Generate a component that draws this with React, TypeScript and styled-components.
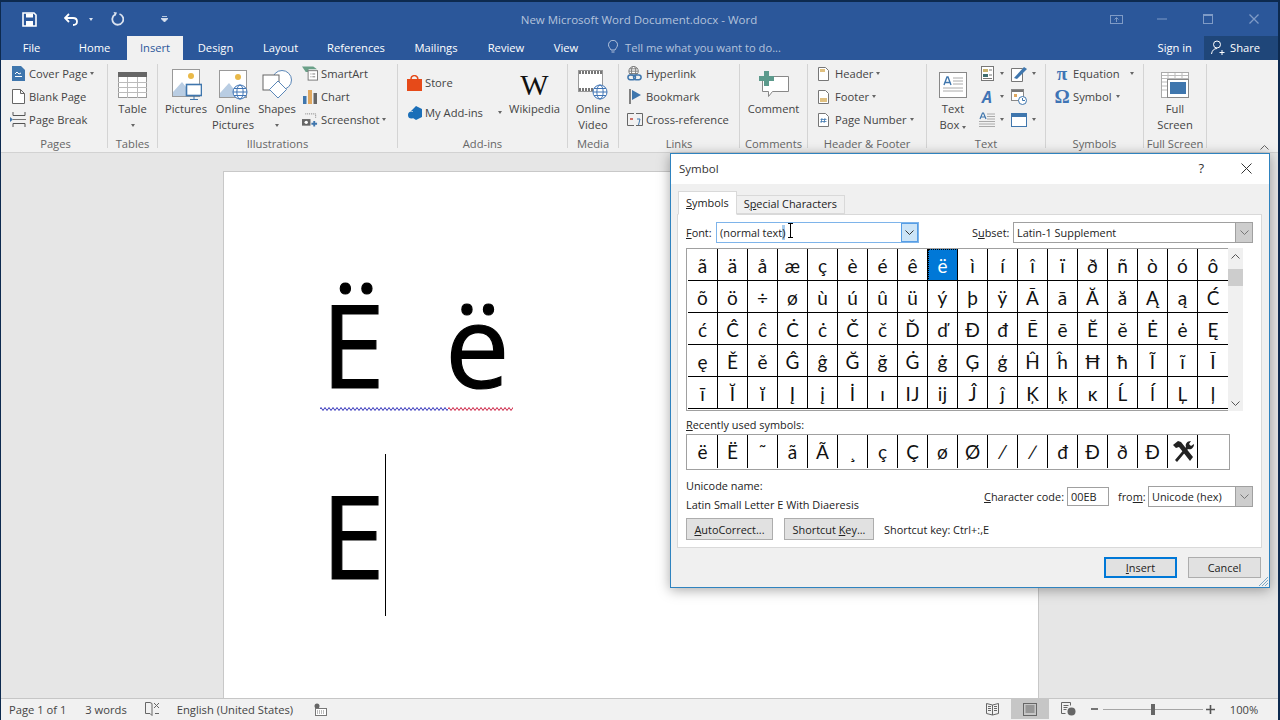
import React from 'react'
import styled, { createGlobalStyle } from 'styled-components'

const Global = createGlobalStyle`
  html, body { margin: 0; padding: 0; overflow: hidden; }
  body { font-family: "Open Sans", "Noto Sans", sans-serif; font-size: 11.2px; color: #444; }
`

const Frame = styled.div`
  position: relative;
  width: 1280px;
  height: 720px;
  box-sizing: border-box;
  display: flex;
  flex-direction: column;
  background: #2b579a;
  border-top: 2px solid #0d2a4f;
  border-left: 1px solid #0d2a4f;
  border-right: 2px solid #0d2a4f;
  overflow: hidden;
`
const TitleBar = styled.div`
  height: 34px;
  display: flex;
  align-items: center;
  position: relative;
  flex: none;
`
const QatButton = styled.div<{ $w: number }>`
  width: ${p => p.$w}px;
  display: flex;
  justify-content: center;
  align-items: center;
`
const Qat = styled.div`
  display: flex;
  align-items: center;
  padding-left: 18px;
  width: 200px;
`
const DocTitle = styled.div`
  position: absolute;
  left: 0;
  right: 0;
  top: 10px;
  text-align: center;
  color: #b4c3dc;
  font-size: 11.5px;
  line-height: 16px;
  padding-right: 1px;
`
const WindowControls = styled.div`
  margin-left: auto;
  display: flex;
  align-items: center;
  padding-right: 1px;
`
const WinButton = styled.div`
  width: 46px;
  display: flex;
  justify-content: center;
`
const TabRow = styled.div`
  height: 24px;
  display: flex;
  flex: none;
  align-items: stretch;
`
const Tab = styled.div<{ $w: number; $active?: boolean }>`
  width: ${p => p.$w}px;
  display: flex;
  align-items: center;
  justify-content: center;
  padding-bottom: 2px;
  box-sizing: border-box;
  color: ${p => (p.$active ? '#2b579a' : '#fff')};
  background: ${p => (p.$active ? '#f1f1f1' : 'transparent')};
`
const TellMe = styled.div`
  display: flex;
  align-items: center;
  gap: 7px;
  padding: 0 0 2px 15px;
  color: #b4c3dc;
`
const SignIn = styled.div`
  margin-left: auto;
  color: #fff;
  display: flex;
  align-items: center;
  padding: 0 12px 2px 0;
`
const Share = styled.div`
  width: 74px;
  background: #1f4679;
  color: #fff;
  display: flex;
  align-items: center;
  gap: 4px;
  padding: 0 0 2px 7px;
  box-sizing: border-box;
`
const Ribbon = styled.div`
  height: 93px;
  flex: none;
  background: #f1f1f1;
  border-bottom: 1px solid #d2d2d2;
  box-sizing: border-box;
  display: flex;
  padding: 4px 0 0 3px;
`
const Group = styled.section<{ $w: number }>`
  width: ${p => p.$w}px;
  height: 84px;
  box-sizing: border-box;
  border-right: 1px solid #d4d4d4;
  display: flex;
  flex-direction: column;
  flex: none;
`
const GroupBody = styled.div`
  flex: 1;
  min-height: 0;
  display: flex;
`
const GroupLabel = styled.div`
  height: 16px;
  margin-bottom: -4px;
  line-height: 16px;
  text-align: center;
  color: #666;
  white-space: nowrap;
`
const Large = styled.div<{ $w: number }>`
  width: ${p => p.$w}px;
  flex: none;
  display: flex;
  flex-direction: column;
  align-items: center;
  line-height: 16px;
  text-align: center;
  white-space: nowrap;
`
const LargeIcon = styled.div`
  height: 33px;
  margin-top: 4px;
  display: flex;
  align-items: center;
  justify-content: center;
`
const Column = styled.div<{ $pad?: number; $w?: number; $gap?: number }>`
  display: flex;
  flex-direction: column;
  box-sizing: border-box;
  margin-top: ${p => (p.$gap ? '7px' : '-2px')};
  padding-left: ${p => p.$pad ?? 0}px;
  ${p => (p.$w ? `width: ${p.$w}px; flex: none;` : '')}
  ${p => (p.$gap ? `gap: ${p.$gap}px;` : '')}
`
const Item = styled.div<{ $gap?: number }>`
  height: 23px;
  display: flex;
  align-items: center;
  gap: ${p => p.$gap ?? 3}px;
  white-space: nowrap;
`
const Slot = styled.span<{ $w?: number; $ml?: number }>`
  width: ${p => p.$w ?? 16}px;
  margin-left: ${p => p.$ml ?? 0}px;
  flex: none;
  display: flex;
  justify-content: center;
  align-items: center;
`
const Caret = styled.i<{ $ml?: number; $light?: boolean }>`
  display: inline-block;
  width: 0;
  height: 0;
  margin-left: ${p => p.$ml ?? 3}px;
  border-left: 2.5px solid transparent;
  border-right: 2.5px solid transparent;
  border-top: 3px solid ${p => (p.$light ? '#dbe3f0' : '#666')};
  flex: none;
`
const CaretRow = styled.div`
  height: 16px;
  display: flex;
  align-items: center;
  justify-content: center;
`
const Wiki = styled.div`
  font-family: "Liberation Serif", serif;
  font-size: 30px;
  color: #111;
  line-height: 30px;
`
const MathGlyph = styled.span`
  font-family: "Liberation Serif", serif;
  font-weight: 700;
  font-size: 19px;
  color: #3f74b5;
  line-height: 20px;
`
const WordArtA = styled.span`
  font-family: "Open Sans", sans-serif;
  font-weight: 700;
  font-style: italic;
  font-size: 16px;
  color: #3f74b5;
  line-height: 16px;
`
const Collapse = styled.div`
  margin-left: auto;
  align-self: flex-end;
  margin-bottom: 2px;
  margin-right: 9px;
  display: flex;
`
const Workspace = styled.main`
  flex: 1;
  min-height: 0;
  background: #e6e6e6;
  padding: 18px 0 0 222px;
  overflow: hidden;
`
const Page = styled.div`
  width: 816px;
  height: 620px;
  box-sizing: border-box;
  background: #fff;
  border: 1px solid #c8c8c8;
  padding: 93px 0 0 96px;
  font-family: "Open Sans", sans-serif;
  color: #000;
`
const DocLine = styled.div<{ $h: number }>`
  height: ${p => p.$h}px;
  display: flex;
  align-items: flex-end;
  font-size: 115px;
  -webkit-text-stroke: 1.2px #000;
  line-height: 1;
`
const DocLetter = styled.span<{ $ml?: number }>`
  margin-left: ${p => p.$ml ?? 0}px;
`
const DocCaret = styled.span`
  width: 1px;
  height: 162px;
  background: #000;
  margin-left: 0;
  margin-bottom: -24px;
`
const Squiggles = styled.div`
  display: flex;
  margin-top: 5px;
  height: 5px;
`
const StatusBar = styled.footer`
  height: 22px;
  flex: none;
  background: #f1f1f1;
  border-top: 1px solid #c6c6c6;
  box-sizing: border-box;
  display: flex;
  align-items: center;
  padding: 0 0 1px 8px;
  color: #444;
`
const StatusText = styled.span<{ $ml?: number }>`
  margin-left: ${p => p.$ml ?? 0}px;
  white-space: nowrap;
`
const StatusRight = styled.div`
  margin-left: auto;
  display: flex;
  align-items: center;
  height: 100%;
`
const ViewBtn = styled.div<{ $active?: boolean }>`
  width: 38px;
  height: 100%;
  display: flex;
  align-items: center;
  justify-content: center;
  background: ${p => (p.$active ? '#c6c6c6' : 'transparent')};
`
const ZoomSlider = styled.div`
  width: 100px;
  height: 1px;
  background: #a6a6a6;
  margin: 0 3px 0 5px;
  display: flex;
  justify-content: center;
  align-items: center;
`
const ZoomThumb = styled.div`
  width: 4px;
  height: 11px;
  background: #666;
  flex: none;
`
const ZoomPct = styled.div`
  width: 58px;
  margin-right: 5px;
  text-align: center;
`

/* Symbol dialog */
const Dialog = styled.div`
  position: absolute;
  left: 669px;
  top: 151px;
  width: 600px;
  height: 435px;
  box-sizing: border-box;
  background: #f0f0f0;
  border: 1px solid #2f83bf;
  box-shadow: 0 2px 12px rgba(0, 0, 0, 0.35);
  display: flex;
  flex-direction: column;
  font-size: 10.9px;
  color: #222;
`
const DlgTitle = styled.div`
  height: 30px;
  box-sizing: border-box;
  background: #fff;
  display: flex;
  align-items: center;
  padding: 0 17px 2px 8px;
  font-size: 11.5px;
  flex: none;
  color: #333;
`
const Help = styled.span`
  margin-left: auto;
  margin-right: 37px;
  font-size: 13px;
`
const DlgTabs = styled.div`
  display: flex;
  align-items: flex-end;
  height: 30px;
  padding-left: 7px;
  flex: none;
  position: relative;
  z-index: 1;
`
const DlgTab = styled.div<{ $active?: boolean }>`
  height: ${p => (p.$active ? 24 : 19)}px;
  box-sizing: border-box;
  padding: 0 7px 2px;
  display: flex;
  align-items: center;
  border: 1px solid #d9d9d9;
  border-bottom: ${p => (p.$active ? '1px solid #fff' : '1px solid #d9d9d9')};
  border-left: ${p => (p.$active ? '1px solid #d9d9d9' : 'none')};
  background: ${p => (p.$active ? '#fff' : '#f0f0f0')};
  margin-bottom: ${p => (p.$active ? -1 : 0)}px;
`
const Panel = styled.div`
  margin: 0 7px 0 6px;
  height: 334px;
  flex: none;
  box-sizing: border-box;
  background: #fff;
  border: 1px solid #d9d9d9;
  padding: 7px 8px 0 8px;
`
const FieldRow = styled.div`
  display: flex;
  align-items: center;
  height: 21px;
`
const Label = styled.span<{ $ml?: number; $w?: number }>`
  margin-left: ${p => p.$ml ?? 0}px;
  ${p => (p.$w ? `width: ${p.$w}px; flex: none;` : '')}
  white-space: nowrap;
`
const Select = styled.div<{ $w: number; $focus?: boolean }>`
  width: ${p => p.$w}px;
  height: 21px;
  box-sizing: border-box;
  border: 1px solid ${p => (p.$focus ? '#7eb4ea' : '#a0a0a0')};
  background: #fff;
  display: flex;
  align-items: center;
  padding-left: 3px;
  white-space: nowrap;
  flex: none;
`
const SelectBtn = styled.div<{ $focus?: boolean }>`
  margin-left: auto;
  width: 17px;
  height: 19px;
  box-sizing: border-box;
  display: flex;
  align-items: center;
  justify-content: center;
  background: ${p => (p.$focus ? '#cce4f7' : '#cdcdcd')};
  border-left: 1px solid ${p => (p.$focus ? '#569de5' : '#a0a0a0')};
  ${p => p.$focus && 'border: 1px solid #569de5;'}
`
const Highlight = styled.span`
  background: #a8cdee;
`
const GridRow = styled.div`
  display: flex;
  margin-top: 5px;
`
const SymbolGrid = styled.div`
  display: grid;
  grid-template-columns: repeat(18, 30px);
  grid-auto-rows: 32px;
  border-top: 1px solid #a0a0a0;
  border-left: 1px solid #a0a0a0;
  border-bottom: 1px solid #a0a0a0;
  padding-left: 1px;
  width: 542px;
  box-sizing: border-box;
  height: 163px;
`
const Cell = styled.div<{ $selected?: boolean; $recent?: boolean }>`
  box-sizing: border-box;
  display: flex;
  align-items: center;
  justify-content: center;
  padding-top: ${p => (p.$recent ? 0 : 1)}px;
  font-family: Lato, "Open Sans", sans-serif;
  font-size: 19px;
  color: ${p => (p.$selected ? '#fff' : '#111')};
  background: ${p => (p.$selected ? '#0078d7' : '#fff')};
  border-right: 1px solid #000;
  border-bottom: ${p => (p.$recent ? 'none' : '1px solid #000')};
  ${p => p.$selected && 'outline: 1px dotted #000; outline-offset: -1px;'}
  &:nth-child(18n) { border-right: none; }
`
const ScrollBar = styled.div`
  width: 15px;
  height: 163px;
  background: #f0f0f0;
  display: flex;
  flex-direction: column;
  align-items: center;
`
const ScrollArrow = styled.div`
  height: 16px;
  width: 100%;
  display: flex;
  align-items: center;
  justify-content: center;
  flex: none;
`
const ScrollThumb = styled.div`
  width: 100%;
  height: 17px;
  background: #cdcdcd;
  margin-top: 5px;
  margin-bottom: auto;
`
const Recent = styled.div`
  margin-top: 6px;
  line-height: 15px;
`
const RecentGrid = styled(SymbolGrid)`
  margin-top: 2px;
  grid-auto-rows: 33px;
  width: 544px;
  height: 36px;
  border: 1px solid #a0a0a0;
`
const InfoRow = styled.div`
  display: flex;
  margin-top: 6px;
  height: 40px;
`
const InfoLeft = styled.div`
  width: 298px;
  line-height: 19px;
  white-space: nowrap;
`
const InfoRight = styled.div`
  display: flex;
  align-items: center;
  height: 22px;
  margin-top: 9px;
`
const CodeInput = styled.div`
  width: 42px;
  height: 19px;
  box-sizing: border-box;
  border: 1px solid #a0a0a0;
  line-height: 17px;
  padding-left: 3px;
  background: #fff;
`
const BtnRow = styled.div`
  display: flex;
  align-items: center;
  margin-top: 2px;
`
const Btn = styled.div<{ $w: number; $h?: number; $primary?: boolean; $ml?: number }>`
  width: ${p => p.$w}px;
  height: ${p => p.$h ?? 22}px;
  margin-left: ${p => p.$ml ?? 0}px;
  box-sizing: border-box;
  display: flex;
  align-items: center;
  justify-content: center;
  white-space: nowrap;
  background: #e1e1e1;
  border: ${p => (p.$primary ? '2px solid #0078d7' : '1px solid #adadad')};
`
const DlgFooter = styled.div`
  display: flex;
  justify-content: flex-end;
  gap: 11px;
  padding: 9px 8px 0 0;
`
const Grip = styled.svg`
  position: absolute;
  right: 1px;
  bottom: 1px;
`
const IBeam = styled.svg`
  position: absolute;
  left: 116px;
  top: 69px;
`

/* drawings */
const Globe = ({ cx, cy, r, c = '#3f74b5' }: { cx: number; cy: number; r: number; c?: string }) => (
  <g fill="none" stroke={c} strokeWidth="1">
    <circle cx={cx} cy={cy} r={r} fill="#fff" />
    <ellipse cx={cx} cy={cy} rx={r * 0.45} ry={r} />
    <path d={`M${cx - r} ${cy}h${r * 2}M${cx - r * 0.85} ${cy - r * 0.5}h${r * 1.7}M${cx - r * 0.85} ${cy + r * 0.5}h${r * 1.7}`} />
  </g>
)
const Photo = () => (
  <g>
    <rect x="1.5" y="1.5" width="27" height="27" fill="#fff" stroke="#999" />
    <circle cx="20" cy="8" r="3" fill="#e9b949" />
    <path d="M2 28V24L11 14l8 10v4z" fill="#b9cde3" />
  </g>
)
const I = {
  Cover: () => (
    <svg width="13" height="15" viewBox="0 0 13 15"><path d="M0 0h9l4 4v11H0z" fill="#3f76ad" /><path d="M3 8l2-2 2 2 2-1M3 10.5h7" stroke="#fff" fill="none" /></svg>
  ),
  Blank: () => (
    <svg width="13" height="15" viewBox="0 0 13 15"><path d="M.5.5h8l4 4v10H.5zM8.500.5v4h4" fill="#fff" stroke="#666" /></svg>
  ),
  Break: () => (
    <svg width="16" height="15" viewBox="0 0 16 15"><path d="M3 0v3.5h12V0M3 15v-3.5h12V15" fill="none" stroke="#555" /><path d="M3 7.5h13" stroke="#777" /><path d="M0 5l3 2.5L0 10z" fill="#3f76ad" /></svg>
  ),
  Table: () => (
    <svg width="29" height="26" viewBox="0 0 29 26"><rect x=".5" y=".5" width="28" height="25" fill="#fff" stroke="#999" /><rect width="29" height="5" fill="#666" /><path d="M0 10.5h29M0 15.5h29M0 20.5h29M9.5 5v21M19.5 5v21" stroke="#bbb" /></svg>
  ),
  Pictures: () => (
    <svg width="31" height="33" viewBox="0 0 31 33"><Photo /><rect x="15.5" y="16.5" width="15" height="11" fill="#fff" stroke="#3f76ad" strokeWidth="1.6" /><path d="M23 28v3M19 31.5h8" stroke="#3f76ad" /></svg>
  ),
  Online: () => (
    <svg width="30" height="31" viewBox="0 0 30 31"><Photo /><Globe cx={22} cy={23} r={7} /></svg>
  ),
  Shapes: () => (
    <svg width="31" height="30" viewBox="0 0 31 30"><circle cx="20" cy="10" r="9.5" fill="#fff" stroke="#5b87b8" /><rect x="1" y="5" width="16" height="15" fill="#fff" stroke="#666" /><path d="M16 11l8.5 8.5L16 28l-8.5-8.5z" fill="#fff" stroke="#5b87b8" /></svg>
  ),
  SmartArt: () => (
    <svg width="17" height="15" viewBox="0 0 17 15"><path d="M0 0h12l4 3H7v3H4z" fill="#6aa088" /><rect x="6.5" y="4.5" width="10" height="10" fill="#fff" stroke="#777" /><path d="M9 8h1M9 11h1M11 8h3M11 11h3" stroke="#777" /></svg>
  ),
  Chart: () => (
    <svg width="14" height="14" viewBox="0 0 14 14"><rect y="6" width="3.5" height="8" fill="#3f76ad" /><rect x="5" width="4" height="14" fill="#e0a860" /><rect x="10.5" y="3" width="3.5" height="11" fill="#666" /></svg>
  ),
  Screenshot: () => (
    <svg width="17" height="14" viewBox="0 0 17 14"><path d="M3.5.5h11v5" fill="none" stroke="#777" strokeDasharray="1 1" /><rect y="6" width="9" height="7" fill="#666" /><circle cx="4.5" cy="9.5" r="1.8" fill="#fff" /><path d="M13 8v6M10 11h6" stroke="#3f76ad" strokeWidth="2" /></svg>
  ),
  Store: () => (
    <svg width="15" height="16" viewBox="0 0 15 16"><path d="M0 4h15v12H0z" fill="#e64a19" /><path d="M4 4c0-4 6-5 7 0" fill="none" stroke="#e64a19" strokeWidth="1.4" /></svg>
  ),
  AddIns: () => (
    <svg width="14" height="14" viewBox="0 0 14 14"><path d="M8 0l6 3v8l-6 3-3-2V5H3z" fill="#1b6fb8" /><circle cx="3.5" cy="9" r="3.5" fill="#1b6fb8" /></svg>
  ),
  Video: () => (
    <svg width="30" height="30" viewBox="0 0 30 30"><rect x=".5" y=".5" width="24" height="21" fill="#fff" stroke="#999" /><path d="M1 2.5h23M1 19.5h23" stroke="#777" strokeWidth="3" strokeDasharray="2 1" /><Globe cx={22} cy={22} r={7} /></svg>
  ),
  Hyperlink: () => (
    <svg width="17" height="16" viewBox="0 0 17 16"><Globe cx={7} cy={5} r={5} c="#777" /><rect x="1" y="9" width="8" height="5" rx="2.5" fill="none" stroke="#3f76ad" strokeWidth="1.6" /><rect x="7" y="9" width="8" height="5" rx="2.5" fill="none" stroke="#3f76ad" strokeWidth="1.6" /></svg>
  ),
  Bookmark: () => (
    <svg width="12" height="15" viewBox="0 0 12 15"><path d="M1 0v15" stroke="#666" strokeWidth="1.6" /><path d="M3 1l9 5-9 5z" fill="#3f76ad" /></svg>
  ),
  CrossRef: () => (
    <svg width="16" height="14" viewBox="0 0 16 14"><path d="M7 .5H.5v12H7M9 .5h6.500v12H9" fill="none" stroke="#666" /><path d="M3 6h3" stroke="#c0392b" strokeWidth="1.4" /><path d="M10 6h3l-1.5 6" stroke="#3f76ad" fill="none" /></svg>
  ),
  Comment: () => (
    <svg width="32" height="28" viewBox="0 0 32 28"><path d="M4.500 5.500h26v15h-16l-4 5v-5h-6z" fill="#fff" stroke="#888" /><path d="M6 0h5v5h5v5h-5v5H6v-5H1V5h5z" fill="#5c9a8c" /></svg>
  ),
  Header: () => (
    <svg width="11" height="14" viewBox="0 0 11 14"><path d="M.5.5h7l3 3v10H.5z" fill="#fff" stroke="#777" /><rect x="2" y="2" width="5" height="3" fill="#e0c080" /></svg>
  ),
  Footer: () => (
    <svg width="11" height="14" viewBox="0 0 11 14"><path d="M.5.5h7l3 3v10H.5z" fill="#fff" stroke="#777" /><rect x="2" y="8" width="7" height="4" fill="#e0c080" /></svg>
  ),
  PageNum: () => (
    <svg width="11" height="14" viewBox="0 0 11 14"><path d="M.5.5h7l3 3v10H.5z" fill="#fff" stroke="#777" /><path d="M4 5l-1 5M7 5l-1 5M2.500 6.500h6M2.500 8.500h6" stroke="#3f76ad" strokeWidth=".8" /></svg>
  ),
  TextBox: () => (
    <svg width="28" height="26" viewBox="0 0 28 26"><rect x=".5" y=".5" width="27" height="25" fill="#fff" stroke="#888" /><path d="M5 13l3-8h1l3 8M6 10.500h5" fill="none" stroke="#3f76ad" strokeWidth="1.4" /><path d="M14 6h10M14 9h10M14 12h10M4 16h20M4 19h20" stroke="#aaa" /></svg>
  ),
  Parts: () => (
    <svg width="13" height="15" viewBox="0 0 13 15"><rect x=".5" y=".5" width="12" height="14" fill="#fff" stroke="#777" /><rect x="2" y="3" width="5" height="3" fill="#c9b26c" /><rect x="2" y="8" width="5" height="3" fill="#3f6d70" /><path d="M8 4h3M8 9h3M2 12.500h9" stroke="#777" /></svg>
  ),
  Signature: () => (
    <svg width="16" height="16" viewBox="0 0 16 16"><path d="M.5 2.500h11v13H.5z" fill="#fff" stroke="#777" /><path d="M3 12L13 1l3 2L6 13z" fill="#3f76ad" /></svg>
  ),
  Art: () => <WordArtA>A</WordArtA>,
  DropCap: () => (
    <svg width="16" height="15" viewBox="0 0 16 15"><path d="M1 7l2.500-6h1L7 7M2 5h4" fill="none" stroke="#3f76ad" strokeWidth="1.2" /><path d="M8 2h8M8 4.500h8M8 7h8M0 9.500h16M0 12h16M0 14.500h16" stroke="#aaa" /></svg>
  ),
  DateTime: () => (
    <svg width="16" height="16" viewBox="0 0 16 16"><rect x=".5" y=".5" width="12" height="11" fill="#fff" stroke="#888" /><path d="M1 2h11" stroke="#777" strokeWidth="2" /><path d="M3 5h3v3H3z" fill="#e0a860" /><circle cx="11.500" cy="11.500" r="4" fill="#fff" stroke="#3f76ad" /><path d="M11.500 9v2.500H14" stroke="#3f76ad" fill="none" /></svg>
  ),
  ObjectBox: () => (
    <svg width="16" height="14" viewBox="0 0 16 14"><rect x=".5" y=".5" width="15" height="13" fill="#fff" stroke="#3f76ad" /><rect width="16" height="4" fill="#3f76ad" /></svg>
  ),
  FullScreen: () => (
    <svg width="28" height="26" viewBox="0 0 28 26"><rect x=".5" y=".5" width="27" height="25" fill="#fff" stroke="#aaa" /><path d="M1 3.500h26M1 6.500h26M7 1v5M14 1v5M21 1v5M1 10h5M1 14h5M1 18h5" stroke="#bbb" /><rect x="6.500" y="7.500" width="21" height="18" fill="#fff" stroke="#888" /><rect x="9" y="10" width="16" height="12" fill="#3f76ad" /></svg>
  ),
  Tools: () => (
    <svg width="22" height="21" viewBox="0 0 22 21"><path d="M1 4l5-4 3 1 12 15-3 4L7 6 4 7z" fill="#222" /><path d="M3 19L14 6c-1-3 1-6 5-6l-2 3 2 2 3-2c0 4-3 6-6 5L5 21z" fill="#222" /></svg>
  ),
}
const Wave = ({ w, c }: { w: number; c: string }) => (
  <svg width={w} height="5" viewBox={`0 0 ${w} 5`}>
    <path d={`M0 3${Array.from({ length: Math.ceil(w / 2) }, (_, i) => `l1 ${i % 2 ? 1.5 : -1.5}l1 ${i % 2 ? -1.5 : 1.5}`).join('')}`} fill="none" stroke={c} strokeWidth="1" />
  </svg>
)
const Chevron = ({ c = '#555', up }: { c?: string; up?: boolean }) => (
  <svg width="9" height="5" viewBox="0 0 9 5"><path d={up ? 'M.5 4.500l4-4 4 4' : 'M.5.500l4 4 4-4'} fill="none" stroke={c} /></svg>
)

const symbols = 'ãäåæçèéêëìíîïðñòóôõö÷øùúûüýþÿĀāĂăĄąĆćĈĉĊċČčĎďĐđĒēĔĕĖėĘęĚěĜĝĞğĠġĢģĤĥĦħĨĩĪīĬĭĮįİıĲĳĴĵĶķĸĹĺĻļ'.split('')
const recent = ['ë', 'Ë', '˜', 'ã', 'Ã', '¸', 'ç', 'Ç', 'ø', 'Ø', '⁄', '∕', 'đ', 'Đ', 'ð', 'Đ']

export default function App() {
  return (
    <Frame>
      <Global />
      <TitleBar>
        <Qat>
          <QatButton $w={20}>
            <svg width="15" height="15" viewBox="0 0 15 15"><path d="M1 1h11l2 2v11H1z" fill="none" stroke="#fff" strokeWidth="1.6" /><path d="M4 1.500h7v4H4zM4 9h7v5H4z" fill="#fff" /></svg>
          </QatButton>
          <QatButton $w={42}>
            <svg width="15" height="13" viewBox="0 0 15 13" style={{ marginLeft: 22 }}><path d="M5 1L1 5l4 4" fill="none" stroke="#fff" strokeWidth="1.8" /><path d="M1 5h8c3 0 4 2 4 3.500S12 12 9 12" fill="none" stroke="#fff" strokeWidth="1.8" /></svg>
          </QatButton>
          <QatButton $w={16}><Caret $ml={4} $light /></QatButton>
          <QatButton $w={34}>
            <svg width="14" height="14" viewBox="0 0 14 14" style={{ marginLeft: 6 }}><path d="M5 2.500A5.500 5.500 0 1 0 9.500 2" fill="none" stroke="#dbe3f0" strokeWidth="1.8" /><path d="M3.500 0L7 .5 5.500 4z" fill="#dbe3f0" /></svg>
          </QatButton>
          <QatButton $w={58}>
            <svg width="7" height="6" viewBox="0 0 7 6" style={{ marginLeft: 8 }}><path d="M1 .5h5M0 2.500h7l-3.500 3.500z" stroke="#dbe3f0" strokeWidth=".8" fill="#dbe3f0" /></svg>
          </QatButton>
        </Qat>
        <DocTitle>New Microsoft Word Document.docx - Word</DocTitle>
        <WindowControls>
          <WinButton>
            <svg width="13" height="9" viewBox="0 0 13 9"><rect x=".5" y=".5" width="12" height="8" fill="none" stroke="#7f9bc6" /><path d="M6.500 7V3M4.500 4.500l2-2 2 2" stroke="#7f9bc6" fill="none" /></svg>
          </WinButton>
          <WinButton><svg width="10" height="2" viewBox="0 0 10 2"><path d="M0 1h10" stroke="#7f9bc6" /></svg></WinButton>
          <WinButton><svg width="10" height="10" viewBox="0 0 10 10"><rect x=".5" y=".5" width="9" height="9" fill="none" stroke="#7f9bc6" /><path d="M0 1.500h10" stroke="#7f9bc6" /></svg></WinButton>
          <WinButton><svg width="10" height="10" viewBox="0 0 10 10"><path d="M.5.5l9 9M9.500.5l-9 9" stroke="#7f9bc6" strokeWidth="1.3" /></svg></WinButton>
        </WindowControls>
      </TitleBar>
      <TabRow>
        <Tab $w={61}>File</Tab>
        <Tab $w={65}>Home</Tab>
        <Tab $w={56} $active>Insert</Tab>
        <Tab $w={65}>Design</Tab>
        <Tab $w={65}>Layout</Tab>
        <Tab $w={86}>References</Tab>
        <Tab $w={74}>Mailings</Tab>
        <Tab $w={66}>Review</Tab>
        <Tab $w={54}>View</Tab>
        <TellMe>
          <svg width="10" height="14" viewBox="0 0 10 14"><path d="M3 10C2 8 .5 7 .5 4.800a4.500 4.500 0 0 1 9 0C9.500 7 8 8 7 10zM3.500 12h3" fill="none" stroke="#b4c3dc" /></svg>
          Tell me what you want to do...
        </TellMe>
        <SignIn>Sign in</SignIn>
        <Share>
          <svg width="15" height="15" viewBox="0 0 15 15"><circle cx="6" cy="4.500" r="3.500" fill="none" stroke="#fff" /><path d="M.5 14c.5-3.500 2.500-5.500 5.500-5.500M11 10v5M8.500 12.500h5" fill="none" stroke="#fff" /></svg>
          Share
        </Share>
      </TabRow>
      <Ribbon>
        <Group $w={104}>
          <GroupBody>
            <Column $pad={6}>
              <Item><Slot><I.Cover /></Slot>Cover Page<Caret $ml={0} /></Item>
              <Item><Slot><I.Blank /></Slot>Blank Page</Item>
              <Item><Slot><I.Break /></Slot>Page Break</Item>
            </Column>
          </GroupBody>
          <GroupLabel>Pages</GroupLabel>
        </Group>
        <Group $w={50}>
          <GroupBody>
            <Large $w={49}><LargeIcon><I.Table /></LargeIcon>Table<CaretRow><Caret $ml={0} /></CaretRow></Large>
          </GroupBody>
          <GroupLabel>Tables</GroupLabel>
        </Group>
        <Group $w={240}>
          <GroupBody>
            <Large $w={56}><LargeIcon><I.Pictures /></LargeIcon>Pictures</Large>
            <Large $w={38}><LargeIcon><I.Online /></LargeIcon>Online<br />Pictures</Large>
            <Large $w={50}><LargeIcon><I.Shapes /></LargeIcon>Shapes<CaretRow><Caret $ml={0} /></CaretRow></Large>
            <Column>
              <Item><Slot><I.SmartArt /></Slot>SmartArt</Item>
              <Item><Slot><I.Chart /></Slot>Chart</Item>
              <Item><Slot><I.Screenshot /></Slot>Screenshot<Caret $ml={0} /></Item>
            </Column>
          </GroupBody>
          <GroupLabel>Illustrations</GroupLabel>
        </Group>
        <Group $w={170}>
          <GroupBody>
            <Column $pad={9} $w={104} $gap={7}>
              <Item><Slot $w={15}><I.Store /></Slot>Store</Item>
              <Item><Slot $w={15}><I.AddIns /></Slot>My Add-ins<Caret $ml={12} /></Item>
            </Column>
            <Large $w={65}><LargeIcon><Wiki>W</Wiki></LargeIcon>Wikipedia</Large>
          </GroupBody>
          <GroupLabel>Add-ins</GroupLabel>
        </Group>
        <Group $w={51}>
          <GroupBody>
            <Large $w={50}><LargeIcon><I.Video /></LargeIcon>Online<br />Video</Large>
          </GroupBody>
          <GroupLabel>Media</GroupLabel>
        </Group>
        <Group $w={121}>
          <GroupBody>
            <Column $pad={8}>
              <Item><Slot><I.Hyperlink /></Slot>Hyperlink</Item>
              <Item><Slot><I.Bookmark /></Slot>Bookmark</Item>
              <Item><Slot><I.CrossRef /></Slot>Cross-reference</Item>
            </Column>
          </GroupBody>
          <GroupLabel>Links</GroupLabel>
        </Group>
        <Group $w={68}>
          <GroupBody>
            <Large $w={67}><LargeIcon><I.Comment /></LargeIcon>Comment</Large>
          </GroupBody>
          <GroupLabel>Comments</GroupLabel>
        </Group>
        <Group $w={119}>
          <GroupBody>
            <Column $pad={10}>
              <Item $gap={6}><Slot $w={11}><I.Header /></Slot>Header<Caret $ml={-3} /></Item>
              <Item $gap={6}><Slot $w={11}><I.Footer /></Slot>Footer<Caret $ml={-3} /></Item>
              <Item $gap={6}><Slot $w={11}><I.PageNum /></Slot>Page Number<Caret $ml={-3} /></Item>
            </Column>
          </GroupBody>
          <GroupLabel>Header &amp; Footer</GroupLabel>
        </Group>
        <Group $w={119}>
          <GroupBody>
            <Large $w={52}><LargeIcon><I.TextBox /></LargeIcon>Text<br /><span>Box<Caret /></span></Large>
            <Column>
              <Item $gap={0}><Slot><I.Parts /></Slot><Caret $ml={5} /><Slot $w={17} $ml={6}><I.Signature /></Slot><Caret $ml={5} /></Item>
              <Item $gap={0}><Slot><I.Art /></Slot><Caret $ml={5} /><Slot $w={17} $ml={6}><I.DateTime /></Slot></Item>
              <Item $gap={0}><Slot><I.DropCap /></Slot><Caret $ml={5} /><Slot $w={17} $ml={6}><I.ObjectBox /></Slot><Caret $ml={5} /></Item>
            </Column>
          </GroupBody>
          <GroupLabel>Text</GroupLabel>
        </Group>
        <Group $w={98}>
          <GroupBody>
            <Column $pad={8}>
              <Item $gap={3}><Slot><MathGlyph>π</MathGlyph></Slot>Equation<Caret $ml={7} /></Item>
              <Item $gap={3}><Slot><MathGlyph>Ω</MathGlyph></Slot>Symbol<Caret $ml={1} /></Item>
            </Column>
          </GroupBody>
          <GroupLabel>Symbols</GroupLabel>
        </Group>
        <Group $w={63}>
          <GroupBody>
            <Large $w={62}><LargeIcon><I.FullScreen /></LargeIcon>Full<br />Screen</Large>
          </GroupBody>
          <GroupLabel>Full Screen</GroupLabel>
        </Group>
        <Collapse><Chevron up c="#666" /></Collapse>
      </Ribbon>
      <Workspace>
        <Page>
          <DocLine $h={136}><DocLetter $ml={1}>Ë</DocLetter><DocLetter $ml={60}>ë</DocLetter></DocLine>
          <Squiggles><Wave w={128} c="#3333bb" /><Wave w={65} c="#cc2244" /></Squiggles>
          <DocLine $h={181}><DocLetter $ml={1}>E</DocLetter><DocCaret /></DocLine>
        </Page>
      </Workspace>
      <StatusBar>
        <StatusText>Page 1 of 1</StatusText>
        <StatusText $ml={19}>3 words</StatusText>
        <Slot $ml={18}>
          <svg width="15" height="14" viewBox="0 0 15 14"><path d="M5 .5H.5v11H5l2 2V1.500L5 .5" fill="none" stroke="#666" /><path d="M9 1l5 5M14 1L9 6M10 11.500h4" stroke="#666" /></svg>
        </Slot>
        <StatusText $ml={16}>English (United States)</StatusText>
        <Slot $w={14} $ml={20}>
          <svg width="13" height="13" viewBox="0 0 13 13"><circle cx="3" cy="3" r="2.500" fill="#666" /><rect x="1.500" y="5.500" width="11" height="7" fill="#fff" stroke="#777" /><path d="M3 8h8M3 10h8" stroke="#777" strokeDasharray="1 1" /></svg>
        </Slot>
        <StatusRight>
          <ViewBtn>
            <svg width="13" height="13" viewBox="0 0 13 13"><path d="M6.500 2L.5.5v10l6 1.500 6-1.500V.5zM6.500 2v10M2 3.500h3M2 5.500h3M2 7.500h3M8 3.500h3M8 5.500h3M8 7.500h3" fill="none" stroke="#666" /></svg>
          </ViewBtn>
          <ViewBtn $active>
            <svg width="14" height="13" viewBox="0 0 14 13"><rect x=".5" y=".5" width="13" height="12" fill="none" stroke="#666" /><path d="M2.500 3h9M2.500 5h9M2.500 7h9M2.500 9h9" stroke="#666" /></svg>
          </ViewBtn>
          <ViewBtn>
            <svg width="15" height="14" viewBox="0 0 15 14"><path d="M.5.5h9v3M.5.5v11h4M2.500 3.500h5M2.500 5.500h4M2.500 7.500h3" fill="none" stroke="#666" /><circle cx="10.500" cy="9.500" r="4" fill="#666" /></svg>
          </ViewBtn>
          <svg width="7" height="2" viewBox="0 0 7 2" style={{ marginLeft: 4 }}><path d="M0 1h7" stroke="#555" strokeWidth="1.6" /></svg>
          <ZoomSlider><ZoomThumb /></ZoomSlider>
          <svg width="9" height="9" viewBox="0 0 9 9"><path d="M0 4.500h9M4.500 0v9" stroke="#555" strokeWidth="1.6" /></svg>
          <ZoomPct>100%</ZoomPct>
        </StatusRight>
      </StatusBar>

      <Dialog>
        <DlgTitle>
          Symbol
          <Help>?</Help>
          <svg width="11" height="11" viewBox="0 0 11 11"><path d="M.5.5l10 10M10.500.5l-10 10" stroke="#333" /></svg>
        </DlgTitle>
        <DlgTabs>
          <DlgTab $active><span><u>S</u>ymbols</span></DlgTab>
          <DlgTab><span>S<u>p</u>ecial Characters</span></DlgTab>
        </DlgTabs>
        <Panel>
          <FieldRow>
            <Label $w={30}><u>F</u>ont:</Label>
            <Select $w={203} $focus>
              <span>(normal text<Highlight>)</Highlight></span>
              <SelectBtn $focus><Chevron c="#333" /></SelectBtn>
            </Select>
            <Label $ml={53} $w={41}>S<u>u</u>bset:</Label>
            <Select $w={240}>
              Latin-1 Supplement
              <SelectBtn><Chevron c="#777" /></SelectBtn>
            </Select>
          </FieldRow>
          <GridRow>
            <SymbolGrid>
              {symbols.map((s, i) => (
                <Cell key={i} $selected={i === 8}>{s}</Cell>
              ))}
            </SymbolGrid>
            <ScrollBar>
              <ScrollArrow><Chevron up c="#555" /></ScrollArrow>
              <ScrollThumb />
              <ScrollArrow><Chevron c="#555" /></ScrollArrow>
            </ScrollBar>
          </GridRow>
          <Recent><u>R</u>ecently used symbols:</Recent>
          <RecentGrid>
            {recent.map((s, i) => (
              <Cell key={i} $recent>{s}</Cell>
            ))}
            <Cell $recent><I.Tools /></Cell>
            <Cell $recent />
          </RecentGrid>
          <InfoRow>
            <InfoLeft>
              Unicode name:
              <br />
              Latin Small Letter E With Diaeresis
            </InfoLeft>
            <InfoRight>
              <Label $w={83}><u>C</u>haracter code:</Label>
              <CodeInput>00EB</CodeInput>
              <Label $ml={9} $w={30}>fro<u>m</u>:</Label>
              <Select $w={105}>
                Unicode (hex)
                <SelectBtn><Chevron c="#777" /></SelectBtn>
              </Select>
            </InfoRight>
          </InfoRow>
          <BtnRow>
            <Btn $w={87}><span><u>A</u>utoCorrect...</span></Btn>
            <Btn $w={90} $ml={11}><span>Shortcut <u>K</u>ey...</span></Btn>
            <Label $ml={10}>Shortcut key: Ctrl+:,E</Label>
          </BtnRow>
        </Panel>
        <DlgFooter>
          <Btn $w={73} $h={21} $primary><span><u>I</u>nsert</span></Btn>
          <Btn $w={73} $h={21}>Cancel</Btn>
        </DlgFooter>
        <IBeam width="7" height="15" viewBox="0 0 7 15"><path d="M1 .5h5M1 14.500h5M3.500.5v14" stroke="#000" fill="none" /></IBeam>
        <Grip width="10" height="10" viewBox="0 0 10 10"><path d="M10 1L1 10M10 4L4 10M10 7L7 10" stroke="#7aa7c7" /></Grip>
      </Dialog>
    </Frame>
  )
}
